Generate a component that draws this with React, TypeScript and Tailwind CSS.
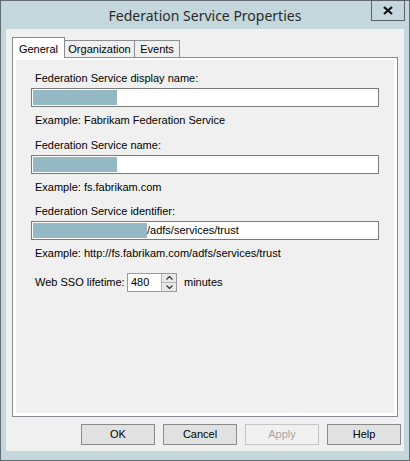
import React from 'react';

const font = { fontFamily: '"Liberation Sans", Arial, sans-serif' };

// text box with the redacted part painted over
const Field: React.FC<{ blur: number; text?: string }> = ({ blur, text }) => (
  <div className="mx-[15px] mt-[3px] h-[19px] border border-[#7a7a7a] bg-white flex items-stretch p-px">
    <div className="bg-[#95b9c4]" style={{ width: blur }} />
    {text && <span className="text-[11px] leading-[15px] text-black">{text}</span>}
  </div>
);

const Label: React.FC<{ children: React.ReactNode; className?: string }> = ({ children, className = '' }) => (
  <div className={`ml-[19px] h-[13px] text-[11px] leading-[13px] text-black ${className}`}>{children}</div>
);

const DlgButton: React.FC<{ label: string; disabled?: boolean }> = ({ label, disabled }) => (
  <div
    className={`w-[74px] h-[21px] flex items-center justify-center text-[11px] border ${
      disabled ? 'border-[#c4c4c4] bg-[#f0f0f0] text-[#a6a6a6]' : 'border-[#8a8a8a] bg-[#e1e1e1] text-black'
    }`}
  >
    {label}
  </div>
);

export default function App() {
  return (
    <div className="w-[410px] h-[461px] bg-[#c3d7dd] border border-[#626b70] flex flex-col relative" style={font}>
      {/* Title bar */}
      <div className="h-[28px] flex items-center justify-center">
        <span className="text-[14px] text-[#2b2b2b] mt-[1px]" style={{ fontFamily: '"Noto Sans", "Liberation Sans", sans-serif' }}>
          Federation Service Properties
        </span>
      </div>
      <div className="absolute top-[-1px] right-[4px] w-[34px] h-[21px] border border-[#5b6064] flex items-center justify-center">
        <svg width="10" height="9" viewBox="0 0 10 9">
          <path d="M1 1 L9 8 M9 1 L1 8" stroke="#111" strokeWidth="2.2" fill="none" />
        </svg>
      </div>

      {/* Client area */}
      <div className="mx-[5px] h-[422px] bg-[#f0f0f0] flex flex-col">
        {/* Tabs */}
        <div className="mt-[8px] ml-[6px] h-[20px] flex items-end text-[11px] text-black">
          <div className="relative z-10 -mb-px w-[53px] h-[21px] bg-white border-x border-t border-[#898c95] flex justify-center pt-[3px]">
            General
          </div>
          <div className="w-[70px] h-[17px] border-t border-r border-[#898c95] flex justify-center items-center">
            Organization
          </div>
          <div className="w-[45px] h-[17px] border-t border-r border-[#898c95] flex justify-center items-center">
            Events
          </div>
        </div>

        {/* Tab panel */}
        <div className="ml-[6px] w-[386px] h-[360px] border border-[#898c95] bg-white pt-[2px] px-[3px] pb-[3px] flex">
          <div className="flex-1 bg-[#f0f0f0] flex flex-col pt-[12px]">
            <Label>Federation Service display name:</Label>
            <Field blur={84} />
            <Label className="mt-[7px]">Example: Fabrikam Federation Service</Label>

            <Label className="mt-[12px]">Federation Service name:</Label>
            <Field blur={84} />
            <Label className="mt-[7px]">Example: fs.fabrikam.com</Label>

            <Label className="mt-[11px]">Federation Service identifier:</Label>
            <Field blur={114} text="/adfs/services/trust" />
            <Label className="mt-[7px]">Example: http://fs.fabrikam.com/adfs/services/trust</Label>

            <div className="mt-[13px] ml-[19px] flex items-center text-[11px] text-black">
              <span className="w-[92px]">Web SSO lifetime:</span>
              <div className="w-[50px] h-[19px] border border-[#9a9a9a] bg-white flex">
                <span className="flex-1 pl-[3px] leading-[17px]">480</span>
                <div className="w-[15px] flex flex-col border-l border-[#b5b5b5]">
                  <div className="flex-1 bg-[#e8e8e8] border-b border-[#b5b5b5] flex items-center justify-center">
                    <svg width="7" height="4" viewBox="0 0 7 4">
                      <path d="M0.5 3.5 L3.5 0.5 L6.5 3.5" stroke="#333" strokeWidth="1.2" fill="none" />
                    </svg>
                  </div>
                  <div className="flex-1 bg-[#e8e8e8] flex items-center justify-center">
                    <svg width="7" height="4" viewBox="0 0 7 4">
                      <path d="M0.5 0.5 L3.5 3.5 L6.5 0.5" stroke="#333" strokeWidth="1.2" fill="none" />
                    </svg>
                  </div>
                </div>
              </div>
              <span className="ml-[7px]">minutes</span>
            </div>
          </div>
        </div>

        {/* Buttons */}
        <div className="mt-[7px] ml-[75px] flex gap-[8px]">
          <DlgButton label="OK" />
          <DlgButton label="Cancel" />
          <DlgButton label="Apply" disabled />
          <DlgButton label="Help" />
        </div>
      </div>
    </div>
  );
}
